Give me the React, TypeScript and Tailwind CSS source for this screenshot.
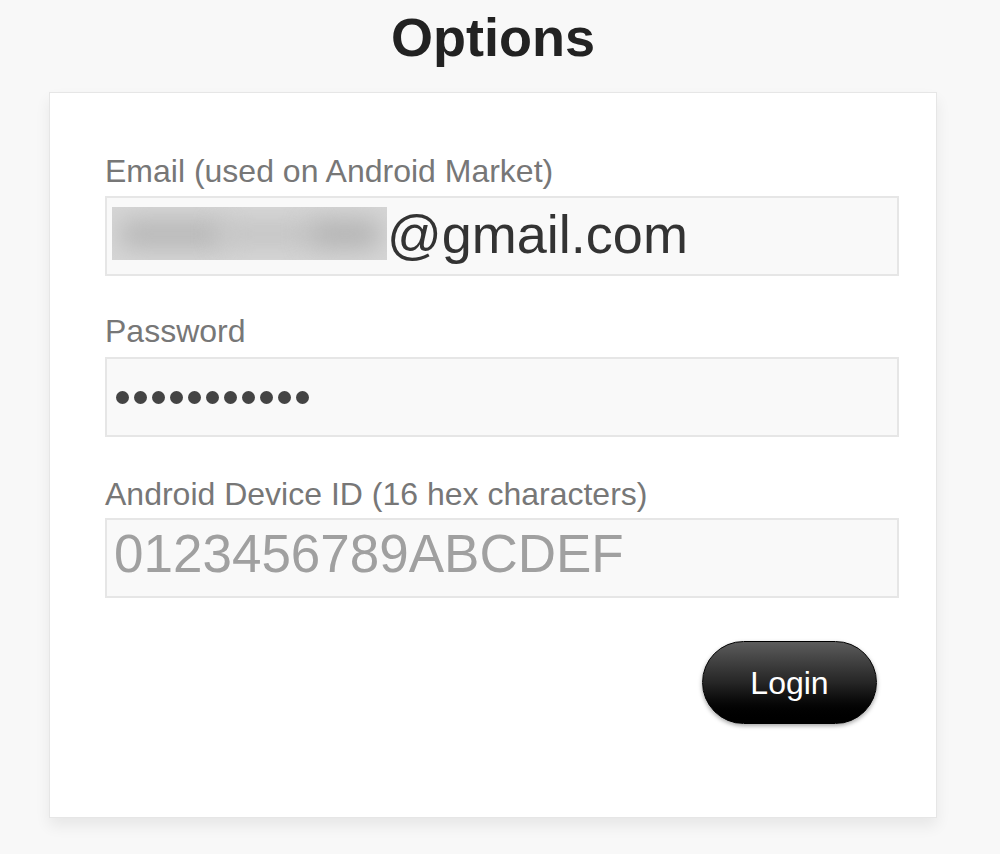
export default function App() {
  const font = "font-['Liberation_Sans',Arial,sans-serif]"
  return (
    <div className={`min-h-[854px] w-[1000px] bg-[#f8f8f8] ${font}`}>
      <h1 className="ml-[49px] w-[888px] pt-[10px] text-center text-[54px] font-bold leading-[54px] text-[#222]">Options</h1>

      <div className="ml-[49px] mt-[28px] h-[726px] w-[888px] border border-[#e6e6e6] bg-white pl-[55px] pt-[60px] shadow-[0_8px_14px_rgba(0,0,0,0.07)]">
        {/* email */}
        <label className="block text-[32px] leading-[36px] text-[#777]">Email (used on Android Market)</label>
        <div className="mt-[7px] flex h-[80px] w-[794px] items-start border-2 border-[#e6e6e6] bg-[#f9f9f9] pl-[5px] pt-[9px]">
          <span className="relative inline-block h-[53px] w-[275px] overflow-hidden bg-[#d6d6d6]">
            <span className="absolute left-[6px] top-[12px] h-[30px] w-[110px] rounded-full bg-[#b8b8b8] blur-md" />
            <span className="absolute left-[105px] top-[14px] h-[26px] w-[100px] rounded-full bg-[#c4c4c4] blur-md" />
            <span className="absolute left-[195px] top-[12px] h-[30px] w-[75px] rounded-full bg-[#b4b4b4] blur-md" />
          </span>
          <span className="text-[54px] leading-[54px] text-[#333]">@gmail.com</span>
        </div>

        {/* password */}
        <label className="mt-[37px] block text-[32px] leading-[36px] text-[#777]">Password</label>
        <div className="mt-[8px] flex h-[80px] w-[794px] items-center gap-[5px] border-2 border-[#e6e6e6] bg-[#f9f9f9] pl-[9px]">
          {Array.from({ length: 11 }).map((_, i) => (
            <span key={i} className="h-[13px] w-[13px] rounded-full bg-[#444]" />
          ))}
        </div>

        {/* device id */}
        <label className="mt-[39px] block text-[32px] leading-[36px] text-[#777]">Android Device ID (16 hex characters)</label>
        <div className="mt-[6px] h-[80px] w-[794px] border-2 border-[#e6e6e6] bg-[#f9f9f9] pl-[7px] pt-[7px]">
          <span className="text-[53px] leading-[54px] text-[#a0a0a0]">0123456789ABCDEF</span>
        </div>

        <div className="mt-[43px] flex w-[794px] justify-end pr-[22px]">
          <button className="h-[83px] w-[175px] rounded-full border border-black bg-gradient-to-b from-[#5c5c5c] via-[#262626] to-black text-[32px] text-white shadow-[0_2px_4px_rgba(0,0,0,0.35)]">
            Login
          </button>
        </div>
      </div>
    </div>
  )
}
